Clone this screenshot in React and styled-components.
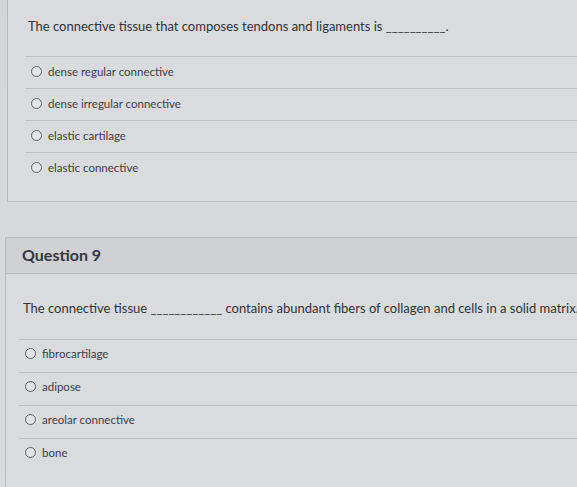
import styled, { createGlobalStyle } from "styled-components";

const GlobalStyle = createGlobalStyle`
  html, body {
    margin: 0;
    padding: 0;
    background: #d4d6da;
    overflow: hidden;
  }
  body {
    font-family: Lato, "Liberation Sans", sans-serif;
    color: #33363b;
  }
`;

// Page
const Page = styled.div`
  width: 577px;
  height: 487px;
  overflow: hidden;
  background: linear-gradient(180deg, #d3d5d9 0%, #d7d9dd 50%, #d8dade 100%);
`;

// Question card
const Card = styled.div`
  width: 640px;
  margin-left: ${(p) => p.$left}px;
  margin-top: ${(p) => p.$top || 0}px;
  background: #d9dbdf;
  border: 1px solid #b7babe;
  border-top-width: ${(p) => (p.$noTop ? 0 : 1)}px;
  padding-bottom: ${(p) => p.$bottom}px;
`;

// Header ("Question 9")
const Header = styled.div`
  height: 36px;
  box-sizing: border-box;
  display: flex;
  align-items: center;
  padding: 0 0 2px 16px;
  background: #cfd1d5;
  border-bottom: 1px solid #b4b7bb;
  font-size: 16px;
  font-weight: 700;
  color: #34373c;
`;

const QuestionText = styled.div`
  padding: ${(p) => p.$top}px 0 ${(p) => p.$below}px ${(p) => p.$indent}px;
  font-size: 13px;
  line-height: 18px;
  color: #303338;
  white-space: nowrap;
`;

const Blank = styled.span`
  color: #3a3d42;
`;

const Answers = styled.div`
  margin-left: ${(p) => p.$indent}px;
  border-top: 1px solid #bcbfc3;
`;

const Answer = styled.label`
  display: flex;
  align-items: center;
  gap: 6px;
  height: ${(p) => p.$h}px;
  padding: 0 0 0 6px;
  box-sizing: border-box;
  padding-bottom: ${(p) => p.$shift}px;
  border-bottom: 1px solid #bcbfc3;
  font-size: 11.5px;
  color: #3d4045;

  &:last-child {
    border-bottom-color: transparent;
  }
`;

const Radio = styled.span`
  width: 9px;
  height: 9px;
  border-radius: 50%;
  border: 1.3px solid #5c6065;
  background: #e2e4e7;
  flex-shrink: 0;
`;

const q8 = [
  "dense regular connective",
  "dense irregular connective",
  "elastic cartilage",
  "elastic connective",
];

const q9 = ["fibrocartilage", "adipose", "areolar connective", "bone"];

export default function App() {
  return (
    <Page>
      <GlobalStyle />
      <Card $left={7} $noTop $bottom={16}>
        <QuestionText $top={17} $below={21} $indent={20}>
          The connective tissue that composes tendons and ligaments is{" "}
          <Blank>__________</Blank>.
        </QuestionText>
        <Answers $indent={17}>
          {q8.map((a) => (
            <Answer key={a} $h={32} $shift={2}>
              <Radio />
              {a}
            </Answer>
          ))}
        </Answers>
      </Card>
      <Card $left={5} $top={35} $bottom={20}>
        <Header>Question 9</Header>
        <QuestionText $top={25} $below={22} $indent={17}>
          The connective tissue <Blank>____________</Blank> contains abundant
          fibers of collagen and cells in a solid matrix.
        </QuestionText>
        <Answers $indent={13}>
          {q9.map((a) => (
            <Answer key={a} $h={33} $shift={6}>
              <Radio />
              {a}
            </Answer>
          ))}
        </Answers>
      </Card>
    </Page>
  );
}
